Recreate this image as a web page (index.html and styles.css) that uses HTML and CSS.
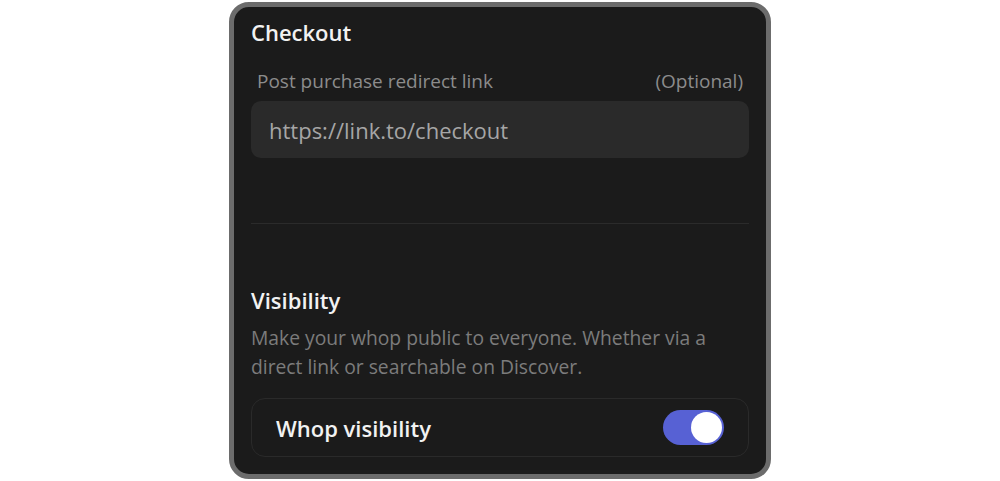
FILE: index.html
```html
<!DOCTYPE html>
<html lang="en">
<head>
  <meta charset="UTF-8">
  <meta name="viewport" content="width=device-width, initial-scale=1.0">
  <title>Whop settings</title>
  <link rel="stylesheet" href="styles.css">
</head>
<body>
  <div class="card">
    <section class="checkout">
      <h2>Checkout</h2>
      <div class="field-label">
        <span>Post purchase redirect link</span>
        <span class="optional">(Optional)</span>
      </div>
      <div class="input">https://link.to/checkout</div>
    </section>

    <hr class="divider">

    <section class="visibility">
      <h2>Visibility</h2>
      <p class="desc">Make your whop public to everyone. Whether via a direct link or searchable on Discover.</p>
      <div class="row">
        <span class="row-title">Whop visibility</span>
        <div class="toggle on"><div class="knob"></div></div>
      </div>
    </section>
  </div>
</body>
</html>
```

FILE: styles.css
```css
body {
  margin: 0;
  background-color: white;
  display: flex;
  justify-content: center;
  font-family: "Open Sans", "Noto Sans", sans-serif;
}

.card {
  box-sizing: border-box;
  width: 542px;
  height: 477px;
  margin-top: 2px;
  padding: 10px 17px 0;
  background-color: #1b1b1b;
  border: 5px solid #6c6c6c;
  border-radius: 20px;
  color: white;
}

h2 {
  margin: 0;
  font-size: 22px;
  line-height: 30px;
  font-weight: 600;
  color: #f2f2f2;
}

.field-label {
  display: flex;
  justify-content: space-between;
  margin-top: 21px;
  padding: 0 6px;
  font-size: 19px;
  line-height: 26px;
  color: #8c8c8c;
}

.input {
  margin-top: 7px;
  height: 57px;
  display: flex;
  align-items: center;
  padding: 0 18px;
  background-color: #2a2a2a;
  border-radius: 10px;
  font-size: 22px;
  color: #a6a6a6;
}

.divider {
  margin: 65px 0 0;
  border: none;
  border-top: 1px solid #2b2b2b;
}

.visibility {
  padding-top: 61px;
}

.desc {
  margin: 8px 0 0;
  font-size: 19.3px;
  line-height: 29px;
  color: #7c7c7c;
}

.row {
  margin-top: 17px;
  height: 59px;
  box-sizing: border-box;
  display: flex;
  align-items: center;
  justify-content: space-between;
  padding: 0 24px;
  border: 1px solid #2a2a2a;
  border-radius: 14px;
}

.row-title {
  font-size: 22px;
  font-weight: 600;
  color: #f2f2f2;
}

.toggle {
  width: 61px;
  height: 35px;
  box-sizing: border-box;
  padding: 2px;
  border-radius: 18px;
  background-color: #5761d4;
  display: flex;
  justify-content: flex-end;
}

.knob {
  width: 31px;
  height: 31px;
  border-radius: 50%;
  background-color: white;
}
```
